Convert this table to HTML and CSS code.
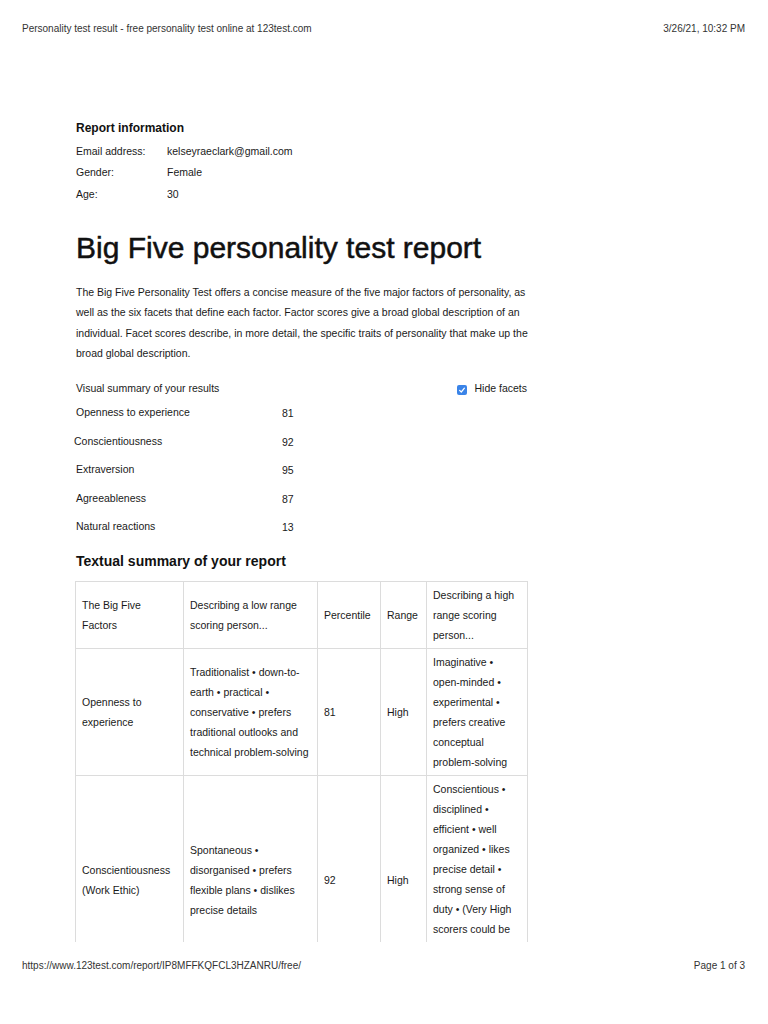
FILE: index.html
```html
<!DOCTYPE html>
<html lang="en">
<head>
<meta charset="utf-8">
<title>Personality test result - free personality test online at 123test.com</title>
<link rel="stylesheet" href="styles.css">
</head>
<body>
<div class="sheet">
  <header class="print-head">
    <span>Personality test result - free personality test online at 123test.com</span>
    <span>3/26/21, 10:32 PM</span>
  </header>

  <main class="content">
    <h3 class="info-title">Report information</h3>
    <div class="info">
      <span>Email address:</span><span>kelseyraeclark@gmail.com</span>
      <span>Gender:</span><span>Female</span>
      <span>Age:</span><span>30</span>
    </div>

    <h1 class="title">Big Five personality test report</h1>
    <p class="intro">The Big Five Personality Test offers a concise measure of the five major factors of personality, as well as the six facets that define each factor. Factor scores give a broad global description of an individual. Facet scores describe, in more detail, the specific traits of personality that make up the broad global description.</p>

    <div class="summary-head">
      <span>Visual summary of your results</span>
      <label class="facets"><span class="check"><svg viewBox="0 0 10 10" width="10" height="10"><path d="M2.6 5.3 L4.3 7 L7.4 3.2" fill="none" stroke="#fff" stroke-width="1.2" stroke-linecap="round" stroke-linejoin="round"/></svg></span>Hide facets</label>
    </div>
    <div class="scores">
      <div class="score"><span>Openness to experience</span><span class="num">81</span></div>
      <div class="score"><span class="shift">Conscientiousness</span><span class="num">92</span></div>
      <div class="score"><span>Extraversion</span><span class="num">95</span></div>
      <div class="score"><span>Agreeableness</span><span class="num">87</span></div>
      <div class="score"><span>Natural reactions</span><span class="num">13</span></div>
    </div>

    <h2 class="sub">Textual summary of your report</h2>
    <table class="report">
      <colgroup>
        <col class="c1"><col class="c2"><col class="c3"><col class="c4"><col class="c5">
      </colgroup>
      <tr>
        <td>The Big Five<br>Factors</td>
        <td>Describing a low range<br>scoring person...</td>
        <td>Percentile</td>
        <td>Range</td>
        <td>Describing a high<br>range scoring<br>person...</td>
      </tr>
      <tr>
        <td>Openness to<br>experience</td>
        <td>Traditionalist • down-to-<br>earth • practical •<br>conservative • prefers<br>traditional outlooks and<br>technical problem-solving</td>
        <td>81</td>
        <td>High</td>
        <td>Imaginative •<br>open-minded •<br>experimental •<br>prefers creative<br>conceptual<br>problem-solving</td>
      </tr>
      <tr class="tall">
        <td>Conscientiousness<br>(Work Ethic)</td>
        <td>Spontaneous •<br>disorganised • prefers<br>flexible plans • dislikes<br>precise details</td>
        <td>92</td>
        <td>High</td>
        <td class="top">Conscientious •<br>disciplined •<br>efficient • well<br>organized • likes<br>precise detail •<br>strong sense of<br>duty • (Very High<br>scorers could be</td>
      </tr>
    </table>
  </main>

  <footer class="print-foot">
    <span>https://www.123test.com/report/IP8MFFKQFCL3HZANRU/free/</span>
    <span>Page 1 of 3</span>
  </footer>
</div>
</body>
</html>
```

FILE: styles.css
```css
* { box-sizing: border-box; }
html, body { margin: 0; padding: 0; background: #fff; }
body {
  font-family: "Liberation Sans", Arial, sans-serif;
  color: #1a1a1a;
}
.sheet {
  width: 768px;
  height: 1024px;
  display: grid;
  grid-template-rows: 56px 886px 1fr;
  overflow: hidden;
}
.print-head, .print-foot {
  display: flex;
  justify-content: space-between;
  padding: 0 23px 0 22px;
  font-size: 10px;
  color: #333;
}
.print-head { align-items: center; }
.print-foot { padding-top: 18px; }

.content {
  overflow: hidden;
  padding-left: 76px;
  width: 528px;
  box-sizing: content-box;
  font-size: 10.5px;
}
.info-title {
  margin: 64px 0 0;
  font-size: 12px;
  line-height: 16px;
  font-weight: bold;
  color: #111;
}
.info {
  margin-top: 4px;
  display: grid;
  grid-template-columns: 91px auto;
  grid-auto-rows: 21.5px;
  align-items: center;
  font-size: 10.5px;
}
.title {
  margin: 23.5px 0 0;
  font-size: 30px;
  line-height: 40px;
  font-weight: normal;
  -webkit-text-stroke: 0.5px #111;
  color: #111;
}
.intro {
  margin: 13.75px 0 0;
  width: 452px;
  line-height: 20.5px;
}
.summary-head {
  margin-top: 14.25px;
  width: 451px;
  display: flex;
  justify-content: space-between;
  line-height: 20px;
  height: 20px;
}
.facets { display: flex; align-items: center; gap: 7px; }
.check {
  width: 10px; height: 10px;
  border-radius: 2px;
  background: #3a84e8;
  display: inline-flex;
  margin-top: 4px;
}
.scores { display: flex; flex-direction: column; }
.score {
  height: 28.5px;
  display: grid;
  grid-template-columns: 206px auto;
  align-items: center;
}
.score .num { padding-top: 2px; }
.shift { margin-left: -2px; }
.sub {
  margin: 9.75px 0 0;
  font-size: 14px;
  line-height: 22px;
  font-weight: bold;
  color: #111;
}
.report {
  margin: 9px 0 0 -1px;
  border-collapse: collapse;
  table-layout: fixed;
  width: 452px;
  line-height: 20px;
}
.report td {
  border: 1px solid #dcdcdc;
  padding: 3px 6px;
  vertical-align: middle;
}
.report .tall { height: 208px; }
.report td.top { vertical-align: top; padding-top: 3px; }
.c1 { width: 108px; }
.c2 { width: 134px; }
.c3 { width: 63px; }
.c4 { width: 46px; }
.c5 { width: 101px; }
```
